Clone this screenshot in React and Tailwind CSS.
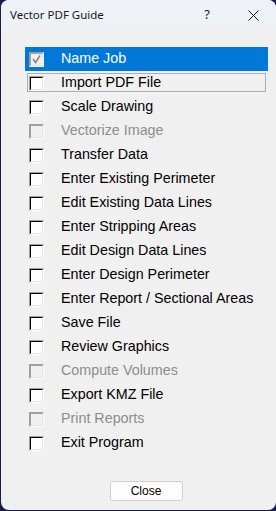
import React from "react";

const items = [
  { label: "Name Job", checked: true, selected: true },
  { label: "Import PDF File", focus: true },
  { label: "Scale Drawing" },
  { label: "Vectorize Image", disabled: true },
  { label: "Transfer Data" },
  { label: "Enter Existing Perimeter" },
  { label: "Edit Existing Data Lines" },
  { label: "Enter Stripping Areas" },
  { label: "Edit Design Data Lines" },
  { label: "Enter Design Perimeter" },
  { label: "Enter Report / Sectional Areas" },
  { label: "Save File" },
  { label: "Review Graphics" },
  { label: "Compute Volumes", disabled: true },
  { label: "Export KMZ File" },
  { label: "Print Reports", disabled: true },
  { label: "Exit Program" },
];

function Box({ checked, disabled }) {
  const light = checked || disabled;
  return (
    <span className="flex w-[15px] h-[15px] border border-t-[#a0a0a0] border-l-[#a0a0a0] border-b-[#ffffff] border-r-[#ffffff]">
      <span
        className={
          "flex flex-1 items-center justify-center border " +
          (light
            ? "bg-[#f0f0f0] border-t-[#a0a0a0] border-l-[#a0a0a0] border-b-[#e3e3e3] border-r-[#e3e3e3]"
            : "bg-white border-t-[#000000] border-l-[#000000] border-b-[#e3e3e3] border-r-[#e3e3e3]")
        }
      >
        {checked && (
          <svg width="11" height="11" viewBox="0 0 11 11">
            <path d="M2 5 L4.5 8.5 L9 1.5" fill="none" stroke="#8a8a8a" strokeWidth="1.6" />
          </svg>
        )}
      </span>
    </span>
  );
}

export default function App() {
  return (
    <div className="w-[276px] h-[511px] bg-[#1c1c4a] pl-[1px] pb-[1px] overflow-hidden">
      <div className="w-full h-full flex flex-col rounded-lg bg-[#f0f0f0] overflow-hidden" style={{ fontFamily: "'Liberation Sans', Arial, sans-serif" }}>
        <div className="h-[30px] shrink-0 bg-[#eef1f5] flex items-center pl-[9px] text-[11.5px] text-[#1a1a1a]" style={{ fontFamily: "'Noto Sans', 'Open Sans', sans-serif" }}>
          <span className="flex-1">Vector PDF Guide</span>
          <span className="w-[46px] text-center text-[13px]">?</span>
          <span className="w-[46px] flex justify-center">
            <svg width="11" height="11" viewBox="0 0 11 11">
              <path d="M0.5 0.5 L10.5 10.5 M10.5 0.5 L0.5 10.5" stroke="#1a1a1a" strokeWidth="1" />
            </svg>
          </span>
        </div>
        <div className="pt-[17px] pl-[24px] pr-[8px] flex flex-col">
          {items.map((it) => (
            <div
              key={it.label}
              className={
                "relative h-[24px] flex items-center pl-[4px] text-[14.3px] " +
                (it.selected ? "bg-[#0078d7] text-white" : it.disabled ? "text-[#8d8d8d]" : "text-black")
              }
            >
              {it.focus && (
                <span className="absolute left-[2px] right-[2px] top-[2px] bottom-[3px] border border-[#adadad]" />
              )}
              <Box checked={it.checked} disabled={it.disabled} />
              <span className="ml-[17px] relative">{it.label}</span>
            </div>
          ))}
        </div>
        <div className="flex-1" />
        <div className="flex justify-center pb-[9px] pl-[15px]">
          <button className="w-[73px] h-[20px] rounded-[3px] border border-[#cfcfcf] bg-[#fdfdfd] text-[12px] text-black flex items-center justify-center">
            Close
          </button>
        </div>
      </div>
    </div>
  );
}
